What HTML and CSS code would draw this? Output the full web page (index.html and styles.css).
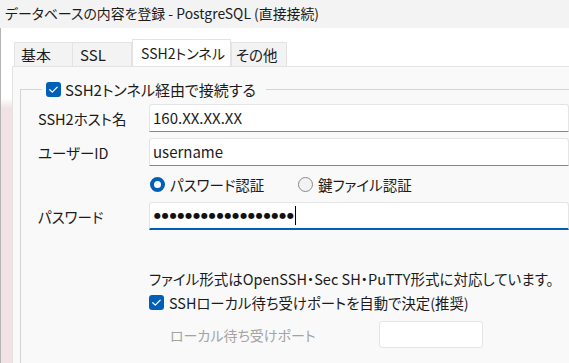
FILE: index.html
```html
<!DOCTYPE html>
<html lang="ja">
<head>
<meta charset="utf-8">
<title>データベースの内容を登録</title>
<link rel="stylesheet" href="styles.css">
</head>
<body>
<div class="window">
  <div class="titlebar">データベースの内容を登録 - PostgreSQL (直接接続)</div>
  <div class="client">
    <div class="edge"></div>
    <div class="main">
      <div class="tabs">
        <div class="tab w-basic">基本</div>
        <div class="tab w-ssl">SSL</div>
        <div class="tab active w-ssh">SSH2トンネル</div>
        <div class="tab w-other">その他</div>
      </div>
      <div class="panel">
        <fieldset class="group">
          <legend class="legend">
            <span class="check on"><svg viewBox="0 0 15 15" width="15" height="15"><path d="M3.8 7.7 L6.3 10.1 L11.2 5.1" fill="none" stroke="#fff" stroke-width="1.3" stroke-linecap="round" stroke-linejoin="round"/></svg></span>
            <span>SSH2トンネル経由で接続する</span>
          </legend>
          <div class="form">
            <label class="lbl">SSH2ホスト名</label>
            <div class="field">160.XX.XX.XX</div>
            <label class="lbl">ユーザーID</label>
            <div class="field">username</div>
            <div></div>
            <div class="radios">
              <span class="radio-item"><span class="radio on"></span>パスワード認証</span>
              <span class="radio-item"><span class="radio"></span>鍵ファイル認証</span>
            </div>
            <label class="lbl">パスワード</label>
            <div class="field focus"><span class="dots">●●●●●●●●●●●●●●●●●●</span><span class="caret"></span></div>
          </div>
          <div class="lower">
            <div class="note">ファイル形式はOpenSSH・Sec SH・PuTTY形式に対応しています。</div>
            <div class="check-row">
              <span class="check on"><svg viewBox="0 0 15 15" width="15" height="15"><path d="M3.8 7.7 L6.3 10.1 L11.2 5.1" fill="none" stroke="#fff" stroke-width="1.3" stroke-linecap="round" stroke-linejoin="round"/></svg></span>
              <span>SSHローカル待ち受けポートを自動で決定(推奨)</span>
            </div>
            <div class="port-row">
              <span class="disabled">ローカル待ち受けポート</span>
              <span class="field small"></span>
            </div>
          </div>
        </fieldset>
      </div>
    </div>
  </div>
</div>
</body>
</html>
```
FILE: styles.css
```css
html, body {
  margin: 0;
  padding: 0;
}
body {
  width: 569px;
  height: 363px;
  overflow: hidden;
  background: #ffffff;
  font-family: "Noto Sans CJK JP", sans-serif;
  font-feature-settings: "palt";
  font-size: 14.5px;
  color: #1b1b1b;
}
.window {
  display: flex;
  flex-direction: column;
  height: 363px;
}
.titlebar {
  height: 28px;
  line-height: 27px;
  padding-left: 5px;
  background: #f3f3f3;
  font-size: 13.9px;
  white-space: nowrap;
  flex: none;
}
.client {
  display: flex;
  flex: 1;
  min-height: 0;
}
.edge {
  width: 11px;
  flex: none;
  border-left: 1px solid #b4b4b4;
  background: linear-gradient(to bottom, #ffffff 0, #ffffff 70px, #f1e3e5 80px, #f1e3e5 100%);
}
.main {
  flex: 1;
  display: flex;
  flex-direction: column;
  min-width: 0;
}
.tabs {
  height: 38px;
  flex: none;
  display: flex;
  align-items: flex-end;
  padding-left: 2px;
  background: #ffffff;
}
.tab {
  box-sizing: border-box;
  height: 24px;
  line-height: 23px;
  padding-left: 6px;
  border: 1px solid #e3e3e3;
  border-bottom: none;
  background: #f3f3f3;
  white-space: nowrap;
  font-size: 15px;
}
.tab + .tab { border-left: none; }
.tab.active {
  height: 27px;
  line-height: 26px;
  background: #ffffff;
  border-left: 1px solid #e3e3e3;
  font-size: 14px;
}
.tab.active + .tab { border-left: 1px solid #e3e3e3; }
.w-basic { width: 59px; }
.w-ssl { width: 59px; padding-left: 7px; }
.w-ssh { width: 99px; padding-left: 8px; }
.w-other { width: 56px; padding-left: 4px; font-size: 14.5px; }
.panel {
  flex: 1;
  border-top: 1px solid #e3e3e3;
  border-left: 1px solid #e3e3e3;
  background: #f9f9f9;
  padding: 11px 0 0 7px;
  overflow: hidden;
}
.group {
  margin: 0;
  padding: 4px 0 0 17px;
  width: 620px;
  height: 320px;
  border: 1px solid #d4d4d4;
  border-right: none;
  border-bottom: none;
}
.legend {
  margin-left: 4px;
  padding: 0 10px 0 4px;
  display: flex;
  align-items: center;
  gap: 4px;
  height: 22px;
  font-size: 15px;
}
.check {
  width: 15px;
  height: 15px;
  border-radius: 3px;
  display: inline-flex;
  flex: none;
}
.check.on { background: #005fb8; }
.form {
  display: grid;
  grid-template-columns: 111px 420px;
  row-gap: 6px;
  align-items: center;
}
.lbl {
  font-size: 14.5px;
  white-space: nowrap;
}
.field {
  box-sizing: border-box;
  height: 28px;
  background: #ffffff;
  border: 1px solid #e5e5e5;
  border-bottom: 1px solid #868686;
  border-radius: 3px 3px 0 0;
  padding-left: 3px;
  font-size: 15px;
  line-height: 26px;
  display: flex;
  align-items: center;
  white-space: nowrap;
}
.field.focus {
  border-bottom: 2px solid #005fb8;
  padding-left: 4px;
}
.dots {
  font-family: "DejaVu Sans", sans-serif;
  font-size: 8px;
  letter-spacing: 0.85px;
  color: #111;
}
.caret {
  width: 1px;
  height: 19px;
  background: #000;
  margin-left: 0px;
}
.radios {
  display: flex;
  height: 24px;
  align-items: center;
  padding-left: 1px;
}
.radio-item {
  display: inline-flex;
  align-items: center;
  gap: 5px;
  font-size: 14.5px;
  width: 148px;
}
.radio {
  box-sizing: border-box;
  width: 15px;
  height: 15px;
  border-radius: 50%;
  border: 1px solid #8a8a8a;
  background: #f3f3f3;
  flex: none;
}
.radio.on {
  border: 4px solid #005fb8;
  background: #ffffff;
}
.lower {
  padding-left: 111px;
  padding-top: 40px;
}
.note {
  font-size: 14.5px;
  line-height: 18px;
  white-space: nowrap;
}
.check-row {
  display: flex;
  align-items: center;
  gap: 5px;
  margin-top: 4px;
  font-size: 14.4px;
  white-space: nowrap;
}
.port-row {
  display: flex;
  align-items: center;
  margin-top: 8px;
  padding-left: 21px;
  gap: 0;
}
.disabled {
  color: #a3a3a3;
  font-size: 14px;
  width: 209px;
  white-space: nowrap;
}
.field.small {
  width: 104px;
  height: 27px;
  border-bottom: 1px solid #e5e5e5;
  border-radius: 3px;
}
```
